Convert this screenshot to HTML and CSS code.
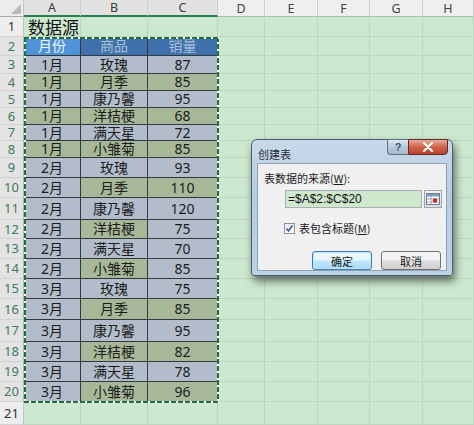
FILE: index.html
```html
<!DOCTYPE html>
<html>
<head>
<meta charset="utf-8">
<link rel="stylesheet" href="styles.css">
</head>
<body>
<div class="sheet">
  <div class="corner"><span class="tri"></span></div>
  <div class="ch sel">A</div><div class="ch sel">B</div><div class="ch sel">C</div><div class="ch">D</div><div class="ch">E</div><div class="ch">F</div><div class="ch">G</div><div class="ch">H</div>

  <div class="rh">1</div><div class="c title">数据源</div><div class="c"></div><div class="c"></div><div class="c"></div><div class="c"></div><div class="c"></div><div class="c"></div><div class="c"></div>

  <div class="rh sel">2</div><div class="t hd1">月份</div><div class="t hd">商品</div><div class="t hd">销量</div><div class="c"></div><div class="c"></div><div class="c"></div><div class="c"></div><div class="c"></div>

  <div class="rh sel">3</div><div class="t b">1月</div><div class="t b">玫瑰</div><div class="t b">87</div><div class="c"></div><div class="c"></div><div class="c"></div><div class="c"></div><div class="c"></div>
  <div class="rh sel">4</div><div class="t g">1月</div><div class="t g">月季</div><div class="t g">85</div><div class="c"></div><div class="c"></div><div class="c"></div><div class="c"></div><div class="c"></div>
  <div class="rh sel">5</div><div class="t b">1月</div><div class="t b">康乃馨</div><div class="t b">95</div><div class="c"></div><div class="c"></div><div class="c"></div><div class="c"></div><div class="c"></div>
  <div class="rh sel">6</div><div class="t g">1月</div><div class="t g">洋桔梗</div><div class="t g">68</div><div class="c"></div><div class="c"></div><div class="c"></div><div class="c"></div><div class="c"></div>
  <div class="rh sel">7</div><div class="t b">1月</div><div class="t b">满天星</div><div class="t b">72</div><div class="c"></div><div class="c"></div><div class="c"></div><div class="c"></div><div class="c"></div>
  <div class="rh sel">8</div><div class="t g">1月</div><div class="t g">小雏菊</div><div class="t g">85</div><div class="c"></div><div class="c"></div><div class="c"></div><div class="c"></div><div class="c"></div>
  <div class="rh sel">9</div><div class="t b">2月</div><div class="t b">玫瑰</div><div class="t b">93</div><div class="c"></div><div class="c"></div><div class="c"></div><div class="c"></div><div class="c"></div>
  <div class="rh sel">10</div><div class="t b">2月</div><div class="t g">月季</div><div class="t g">110</div><div class="c"></div><div class="c"></div><div class="c"></div><div class="c"></div><div class="c"></div>
  <div class="rh sel">11</div><div class="t b">2月</div><div class="t b">康乃馨</div><div class="t b">120</div><div class="c"></div><div class="c"></div><div class="c"></div><div class="c"></div><div class="c"></div>
  <div class="rh sel">12</div><div class="t b">2月</div><div class="t g">洋桔梗</div><div class="t b">75</div><div class="c"></div><div class="c"></div><div class="c"></div><div class="c"></div><div class="c"></div>
  <div class="rh sel">13</div><div class="t b">2月</div><div class="t b">满天星</div><div class="t b">70</div><div class="c"></div><div class="c"></div><div class="c"></div><div class="c"></div><div class="c"></div>
  <div class="rh sel">14</div><div class="t b">2月</div><div class="t g">小雏菊</div><div class="t b">85</div><div class="c"></div><div class="c"></div><div class="c"></div><div class="c"></div><div class="c"></div>
  <div class="rh sel">15</div><div class="t b">3月</div><div class="t b">玫瑰</div><div class="t b">75</div><div class="c"></div><div class="c"></div><div class="c"></div><div class="c"></div><div class="c"></div>
  <div class="rh sel">16</div><div class="t b">3月</div><div class="t g">月季</div><div class="t g">85</div><div class="c"></div><div class="c"></div><div class="c"></div><div class="c"></div><div class="c"></div>
  <div class="rh sel">17</div><div class="t b">3月</div><div class="t b">康乃馨</div><div class="t b">95</div><div class="c"></div><div class="c"></div><div class="c"></div><div class="c"></div><div class="c"></div>
  <div class="rh sel">18</div><div class="t b">3月</div><div class="t g">洋桔梗</div><div class="t g">82</div><div class="c"></div><div class="c"></div><div class="c"></div><div class="c"></div><div class="c"></div>
  <div class="rh sel">19</div><div class="t b">3月</div><div class="t b">满天星</div><div class="t b">78</div><div class="c"></div><div class="c"></div><div class="c"></div><div class="c"></div><div class="c"></div>
  <div class="rh sel">20</div><div class="t b">3月</div><div class="t g">小雏菊</div><div class="t g">96</div><div class="c"></div><div class="c"></div><div class="c"></div><div class="c"></div><div class="c"></div>
  <div class="rh">21</div><div class="c"></div><div class="c"></div><div class="c"></div><div class="c"></div><div class="c"></div><div class="c"></div><div class="c"></div><div class="c"></div>

  <div class="ants"></div>
</div>

<div class="dialog">
  <div class="titlebar">
    <span class="dtitle">创建表</span>
    <div class="ctrls">
      <span class="help">?</span>
      <span class="close">
        <svg width="12" height="10" viewBox="0 0 12 10"><path d="M2 1 L10 9 M10 1 L2 9" stroke="#fff" stroke-width="2.2" stroke-linecap="round"/></svg>
      </span>
    </div>
  </div>
  <div class="panel">
    <div class="lbl">表数据的来源(<u>W</u>):</div>
    <div class="inrow">
      <div class="input">=$A$2:$C$20</div>
      <div class="rbtn">
        <svg width="14" height="12" viewBox="0 0 14 12"><rect x="0.5" y="0.5" width="13" height="11" fill="#fff" stroke="#6d7f93"/><rect x="1" y="1" width="12" height="2.5" fill="#7d9dc0"/><line x1="1" y1="6" x2="13" y2="6" stroke="#9aa"/><line x1="1" y1="9" x2="13" y2="9" stroke="#9aa"/><line x1="5" y1="3" x2="5" y2="11" stroke="#9aa"/><circle cx="9" cy="7.5" r="2.2" fill="#d02020"/></svg>
      </div>
    </div>
    <div class="chkrow">
      <span class="chk">
        <svg width="9" height="9" viewBox="0 0 9 9"><path d="M1.5 4.5 L3.5 7 L7.5 1.5" fill="none" stroke="#3a5a8a" stroke-width="1.6"/></svg>
      </span>
      <span class="chklbl">表包含标题(<u>M</u>)</span>
    </div>
    <div class="btnrow">
      <span class="btn ok">确定</span>
      <span class="btn">取消</span>
    </div>
  </div>
</div>
</body>
</html>
```

FILE: styles.css
```css
html, body {
  margin: 0;
  padding: 0;
}
body {
  width: 474px;
  height: 425px;
  overflow: hidden;
  background: #cce8cf;
  font-family: "Noto Sans", "Noto Sans CJK SC", sans-serif;
  position: relative;
}
.sheet {
  display: grid;
  grid-template-columns: 24px 57px 67px 70px 47px 53px 52px 53px 51px;
  grid-template-rows: 17px 20px 19px 18px 17px 17px 17px 16px 17px 20px 20px 22px 19px 20px 20px 20px 21px 22px 20px 20px 20px 23px;
  width: 474px;
  height: 425px;
  position: relative;
}
.sheet > div {
  box-sizing: border-box;
}
.corner {
  background: #ececec;
  border-right: 1px solid #c6c6c6;
  border-bottom: 1px solid #a9a9a9;
  display: flex;
  align-items: flex-end;
  justify-content: flex-end;
  padding: 0 2px 2px 0;
}
.tri {
  width: 0;
  height: 0;
  border-left: 10px solid transparent;
  border-bottom: 10px solid #b9b9b9;
}
.ch {
  background: #efefef;
  border-right: 1px solid #cfcfcf;
  border-bottom: 1px solid #aabfae;
  color: #454545;
  font-size: 12.5px;
  display: flex;
  align-items: center;
  justify-content: center;
  line-height: 15px;
}
.ch.sel {
  background: #e2e2e2;
  border-bottom: 2px solid #2a7d4c;
  color: #3a3a3a;
}
.rh {
  background: #eeeeee;
  border-right: 1px solid #c3c3c3;
  border-bottom: 1px solid #d2d2d2;
  color: #2e2e2e;
  font-size: 13px;
  display: flex;
  align-items: center;
  justify-content: center;
  line-height: 1;
}
.rh.sel {
  background: #e3e3e3;
  color: #3f7a55;
  border-right: 1px solid #a7bca9;
}
.c {
  border-right: 1px solid #bcd6bf;
  border-bottom: 1px solid #bcd6bf;
}
.title {
  font-family: "Noto Sans CJK SC", sans-serif;
  font-size: 17px;
  color: #111;
  white-space: nowrap;
  display: flex;
  align-items: flex-end;
  padding-left: 4px;
  line-height: 1;
  padding-bottom: 1px;
  overflow: visible;
}
.t {
  border-right: 1px solid #2f3a40;
  border-bottom: 1px solid #2f3a40;
  font-family: "Noto Sans", "Noto Sans CJK SC", sans-serif;
  font-size: 14px;
  color: #1c1c1c;
  display: flex;
  align-items: center;
  justify-content: center;
  line-height: 1;
}
.t.b { background: #b3bccb; }
.t.g { background: #a7b898; }
.t.hd1 { background: #4f92d8; color: #f2f6fb; }
.t.hd { background: #3f71ac; color: #a9bfd8; }
.ants {
  position: absolute;
  left: 24px;
  top: 37px;
  width: 195px;
  height: 366px;
  pointer-events: none;
  background:
    repeating-linear-gradient(90deg, #236e41 0 5px, #ffffff 5px 7px) left top / 100% 2px no-repeat,
    repeating-linear-gradient(90deg, #236e41 0 5px, #ffffff 5px 7px) left bottom / 100% 2px no-repeat,
    repeating-linear-gradient(180deg, #236e41 0 5px, #ffffff 5px 7px) left top / 2px 100% no-repeat,
    repeating-linear-gradient(180deg, #236e41 0 5px, #ffffff 5px 7px) right top / 2px 100% no-repeat;
}

/* dialog */
.dialog {
  position: absolute;
  left: 251px;
  top: 139px;
  width: 202px;
  height: 137px;
  box-sizing: border-box;
  background: linear-gradient(#c9d9ea, #b7cbe0 40%, #bfd1e4);
  border: 1px solid #4e5d6c;
  border-radius: 6px 6px 3px 3px;
  box-shadow: 2px 5px 9px rgba(0, 0, 0, 0.55);
  font-family: "Noto Sans CJK SC", sans-serif;
  padding: 0 5px 4px 5px;
  display: flex;
  flex-direction: column;
}
.titlebar {
  height: 23px;
  display: flex;
  justify-content: space-between;
  align-items: flex-start;
}
.dtitle {
  font-size: 11px;
  color: #1f2d3b;
  margin-top: 6px;
  margin-left: 1px;
}
.ctrls {
  display: flex;
  margin-right: -1px;
  margin-top: -1px;
}
.help {
  width: 21px;
  height: 16px;
  box-sizing: border-box;
  border: 1px solid #5b6f85;
  border-right: none;
  border-radius: 0 0 0 4px;
  background: linear-gradient(#dfe8f2, #b7c7d9 50%, #a8bad0);
  color: #40566f;
  font-size: 11px;
  font-family: "Liberation Sans", sans-serif;
  font-weight: bold;
  display: flex;
  align-items: center;
  justify-content: center;
}
.close {
  width: 40px;
  height: 16px;
  box-sizing: border-box;
  border: 1px solid #5b2a2a;
  border-radius: 0 0 4px 0;
  background: linear-gradient(#e9a99a, #d0634a 50%, #c0412a);
  display: flex;
  align-items: center;
  justify-content: center;
}
.panel {
  flex: 1;
  background: #f0f0f0;
  border: 1px solid #8ea2b6;
  padding: 6px 4px 0 6px;
  display: flex;
  flex-direction: column;
  font-size: 11px;
  color: #1a1a1a;
}
.lbl {
  height: 16px;
  line-height: 16px;
}
.inrow {
  display: flex;
  align-items: center;
  margin-left: 21px;
  margin-top: 4px;
  gap: 2px;
}
.input {
  width: 140px;
  height: 18px;
  box-sizing: border-box;
  border: 1px solid #abadb3;
  background: #cde8cd;
  font-family: "Liberation Sans", sans-serif;
  font-size: 12px;
  line-height: 16px;
  padding-left: 2px;
  color: #111;
}
.rbtn {
  width: 18px;
  height: 18px;
  box-sizing: border-box;
  border: 1px solid #9aa5b2;
  background: linear-gradient(#f4f4f4, #dcdcdc);
  display: flex;
  align-items: center;
  justify-content: center;
}
.chkrow {
  display: flex;
  align-items: center;
  margin-left: 20px;
  margin-top: 12px;
  gap: 4px;
}
.chk {
  width: 11px;
  height: 11px;
  box-sizing: border-box;
  border: 1px solid #8f8f8f;
  background: linear-gradient(#e8eef5, #ffffff);
  display: flex;
  align-items: center;
  justify-content: center;
}
.btnrow {
  display: flex;
  justify-content: flex-end;
  gap: 9px;
  margin-top: 15px;
  padding-right: 1px;
}
.btn {
  width: 60px;
  height: 19px;
  box-sizing: border-box;
  border: 1px solid #707070;
  border-radius: 3px;
  background: linear-gradient(#f3f3f3 45%, #dddddd 55%, #d0d0d0);
  font-size: 11px;
  display: flex;
  align-items: center;
  justify-content: center;
}
.btn.ok {
  border-color: #3c7fb1;
  background: linear-gradient(#eaf6fd 45%, #bee6fd 55%, #a7d9f5);
  box-shadow: inset 0 0 0 1px #bfe4f9;
}
```
